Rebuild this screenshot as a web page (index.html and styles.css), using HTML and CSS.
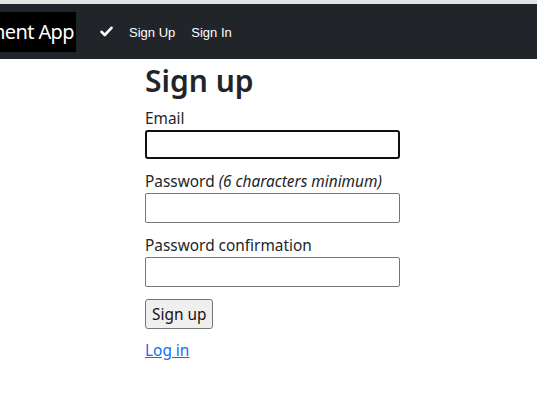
FILE: index.html
```html
<!DOCTYPE html>
<html lang="en">
<head>
  <meta charset="UTF-8">
  <title>Sign up</title>
  <link rel="stylesheet" href="styles.css">
</head>
<body>

  <nav class="navbar">
    <a class="brand" href="#"><span>Equipment App</span></a>
    <ul class="nav-links">
      <li>
        <svg class="check" width="13" height="11" viewBox="0 0 13 11">
          <path d="M1.5 5.8 L4.8 9 L11.5 1.8" fill="none" stroke="#fff" stroke-width="2.6" stroke-linecap="round" stroke-linejoin="round"/>
        </svg>
      </li>
      <li><a href="#">Sign Up</a></li>
      <li><a href="#">Sign In</a></li>
    </ul>
  </nav>

  <main class="content">
    <h2>Sign up</h2>
    <form>
      <div class="field">
        <label for="email">Email</label>
        <input type="email" id="email" class="focused" />
      </div>
      <div class="field">
        <label for="password">Password <em>(6 characters minimum)</em></label>
        <input type="password" id="password" />
      </div>
      <div class="field">
        <label for="password_confirmation">Password confirmation</label>
        <input type="password" id="password_confirmation" />
      </div>
      <button type="button" class="submit">Sign up</button>
    </form>
    <a class="login" href="#">Log in</a>
  </main>

</body>
</html>
```

FILE: styles.css
```css
* {
  box-sizing: border-box;
}
body {
  font-family: 'Noto Sans', sans-serif;
  margin: 0;
  padding: 0;
  border-top: 4px solid #e2e2e2;
  background: #fff;
  color: #212529;
}
.navbar {
  background: #212529;
  height: 55px;
  display: flex;
  align-items: center;
}
.brand {
  width: 76px;
  height: 40px;
  background: #000;
  color: #fff;
  text-decoration: none;
  font-size: 20px;
  letter-spacing: -0.6px;
  display: flex;
  align-items: center;
  justify-content: flex-end;
  overflow: hidden;
  white-space: nowrap;
  padding-right: 2px;
}
.nav-links {
  list-style: none;
  margin: -2px 0 0 24px;
  padding: 0;
  display: flex;
  align-items: center;
  gap: 16px;
}
.nav-links a {
  color: #fff;
  text-decoration: none;
  font-family: 'Liberation Sans', Arial, sans-serif;
  font-size: 13px;
}
.check {
  display: block;
  margin-top: 2px;
}
.content {
  margin-left: 145px;
  width: 255px;
}
h2 {
  font-size: 30px;
  font-weight: 600;
  margin: 2px 0 0;
  line-height: 40px;
}
.field {
  margin-bottom: 12px;
}
.field:first-child {
  margin-top: 7px;
}
label {
  display: block;
  font-size: 15.4px;
  line-height: 22px;
}
input {
  display: block;
  width: 255px;
  height: 30px;
  border: 1px solid #767676;
  border-radius: 2px;
  margin: 0;
}
input.focused {
  border: 2px solid #101010;
  border-radius: 3px;
  height: 29px;
  margin-bottom: 1px;
}
.submit {
  font-family: inherit;
  font-size: 15.4px;
  color: #111;
  background: #efefef;
  border: 1px solid #767676;
  border-radius: 3px;
  height: 30px;
  padding: 0 6px;
}
.login {
  display: inline-block;
  margin-top: 11px;
  color: #0d6efd;
  font-size: 15.4px;
}
```
